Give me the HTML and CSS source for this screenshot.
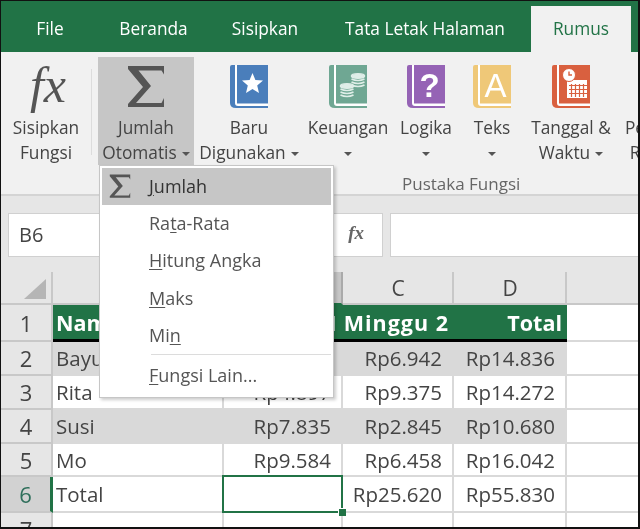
FILE: index.html
```html
<!DOCTYPE html>
<html lang="id">
<head>
<meta charset="utf-8">
<title>Rumus</title>
<link rel="stylesheet" href="styles.css">
</head>
<body>
<svg class="defs" width="0" height="0" aria-hidden="true">
  <symbol id="book" viewBox="0 0 38 44">
    <rect x="5" y="0" width="33" height="41" fill="#fff"/>
    <path d="M2 0H5V38Q5 41 8 41H38V43H6Q0 43 0 38V2Q0 0 2 0Z" fill="currentColor"/>
    <rect x="7" y="0" width="31" height="38.500" fill="currentColor"/>
  </symbol>
  <symbol id="sigma" viewBox="0 0 38 44">
    <path d="M1 1H37V9.5L34.5 5.5H11.5L24 21L9 38H34.5L37 33V42H1V39L16 22L1 4Z" fill="currentColor"/>
  </symbol>
</svg>
<div class="frame">
  <nav class="tabs">
    <span class="tab tab-file">File</span>
    <span class="tab tab-home">Beranda</span>
    <span class="tab tab-insert">Sisipkan</span>
    <span class="tab tab-layout">Tata Letak Halaman</span>
    <span class="tab tab-active">Rumus</span>
  </nav>

  <section class="ribbon">
    <div class="rb rb-fx">
      <div class="rb-icon fx-big">fx</div>
      <div class="rb-text">Sisipkan<br>Fungsi</div>
    </div>
    <div class="rb-sep"></div>
    <div class="rb rb-sum">
      <div class="rb-icon"><svg class="ic-sigma"><use href="#sigma"/></svg></div>
      <div class="rb-text">Jumlah<br>Otomatis<i class="caret"></i></div>
    </div>
    <div class="rb rb-recent">
      <div class="rb-icon">
        <svg class="ic-book c-blue" viewBox="0 0 38 44"><use href="#book" width="38" height="44"/><path d="M22.500 8l2.900 7 7.600.6-5.800 5 1.800 7.400-6.500-4-6.500 4 1.800-7.400-5.800-5 7.600-.6z" fill="#fff"/></svg>
      </div>
      <div class="rb-text">Baru<br>Digunakan<i class="caret"></i></div>
    </div>
    <div class="rb rb-fin">
      <div class="rb-icon">
        <svg class="ic-book c-teal" viewBox="0 0 38 44"><use href="#book" width="38" height="44"/>
          <g fill="none" stroke="#dfeee8" stroke-width="1.600"><ellipse cx="29" cy="11" rx="6.500" ry="2.200" fill="#dfeee8"/><path d="M22.500 14q6.500 3 13 0M22.500 17q6.500 3 13 0M22.500 20q6.500 3 13 0"/><ellipse cx="18" cy="21" rx="6.500" ry="2.200" fill="#dfeee8"/><path d="M11.500 24q6.500 3 13 0M11.500 27q6.500 3 13 0M11.500 30q6.500 3 13 0"/></g>
        </svg>
      </div>
      <div class="rb-text">Keuangan<br><i class="caret solo"></i></div>
    </div>
    <div class="rb rb-logic">
      <div class="rb-icon">
        <svg class="ic-book c-purple" viewBox="0 0 38 44"><use href="#book" width="38" height="44"/><text class="glyph" x="22.500" y="32" text-anchor="middle">?</text></svg>
      </div>
      <div class="rb-text">Logika<br><i class="caret solo"></i></div>
    </div>
    <div class="rb rb-text-fn">
      <div class="rb-icon">
        <svg class="ic-book c-yellow" viewBox="0 0 38 44"><use href="#book" width="38" height="44"/><text class="glyph glyph-thin" x="22.500" y="32" text-anchor="middle">A</text></svg>
      </div>
      <div class="rb-text">Teks<br><i class="caret solo"></i></div>
    </div>
    <div class="rb rb-date">
      <div class="rb-icon">
        <svg class="ic-book c-red" viewBox="0 0 38 44"><use href="#book" width="38" height="44"/>
          <rect x="15" y="15" width="20" height="18" fill="#fff"/>
          <circle cx="17" cy="10" r="6.500" fill="#fff" stroke="#d9603f" stroke-width="1"/>
          <path d="M17 6.500V10H20" stroke="#d9603f" stroke-width="1.400" fill="none"/>
          <path d="M17 20.500H35M17 24.500H35M17 28.500H35M19.500 19V32M23.500 19V32M27.500 19V32M31.500 19V32" stroke="#d9603f" stroke-width="1.200"/>
        </svg>
      </div>
      <div class="rb-text">Tanggal &amp;<br>Waktu<i class="caret"></i></div>
    </div>
    <div class="rb rb-more">
      <div class="rb-icon"></div>
      <div class="rb-text">Pe<br>R</div>
    </div>
    <div class="rb-group">Pustaka Fungsi</div>
  </section>

  <section class="formula">
    <div class="namebox">B6</div>
    <div class="fxbox">fx</div>
    <div class="fbox"></div>
  </section>

  <section class="sheet">
    <div class="grid">
      <div class="hd corner"><svg class="corner-tri" viewBox="0 0 22 20"><path d="M22 0V20H0Z" fill="#b5b5b5"/></svg></div>
      <div class="hd col">A</div>
      <div class="hd col col-sel">B</div>
      <div class="hd col">C</div>
      <div class="hd col">D</div>
      <div class="hd col col-blank"></div>

      <div class="hd row r1">1</div>
      <div class="c th r1 left">Nama</div>
      <div class="c th r1">Minggu 1</div>
      <div class="c th th-wide r1">Minggu 2</div>
      <div class="c th r1">Total</div>
      <div class="c blank"></div>

      <div class="hd row">2</div>
      <div class="c band left">Bayu</div>
      <div class="c band">Rp7.894</div>
      <div class="c band">Rp6.942</div>
      <div class="c band">Rp14.836</div>
      <div class="c blank"></div>

      <div class="hd row">3</div>
      <div class="c left">Rita</div>
      <div class="c">Rp4.897</div>
      <div class="c">Rp9.375</div>
      <div class="c">Rp14.272</div>
      <div class="c blank"></div>

      <div class="hd row">4</div>
      <div class="c band left">Susi</div>
      <div class="c band">Rp7.835</div>
      <div class="c band">Rp2.845</div>
      <div class="c band">Rp10.680</div>
      <div class="c blank"></div>

      <div class="hd row">5</div>
      <div class="c left">Mo</div>
      <div class="c">Rp9.584</div>
      <div class="c">Rp6.458</div>
      <div class="c">Rp16.042</div>
      <div class="c blank"></div>

      <div class="hd row row-sel">6</div>
      <div class="c left">Total</div>
      <div class="c cell-sel"><i class="handle"></i></div>
      <div class="c">Rp25.620</div>
      <div class="c">Rp55.830</div>
      <div class="c blank"></div>

      <div class="hd row">7</div>
      <div class="c"></div>
      <div class="c"></div>
      <div class="c"></div>
      <div class="c"></div>
      <div class="c blank"></div>
    </div>
  </section>

  <div class="menu">
    <div class="mi on"><svg class="mi-sigma"><use href="#sigma"/></svg><span><u>J</u>umlah</span></div>
    <div class="mi"><span>Ra<u>t</u>a-Rata</span></div>
    <div class="mi"><span><u>H</u>itung Angka</span></div>
    <div class="mi"><span><u>M</u>aks</span></div>
    <div class="mi"><span>Mi<u>n</u></span></div>
    <div class="mi-sep"></div>
    <div class="mi"><span><u>F</u>ungsi Lain...</span></div>
  </div>
</div>
</body>
</html>
```
FILE: styles.css
```css
* { box-sizing: border-box; }
html, body { margin: 0; padding: 0; background: #000; }
.defs { position: absolute; }
.frame {
  position: relative;
  width: 640px;
  height: 529px;
  overflow: hidden;
  background: #fff;
  border-style: solid;
  border-color: #111;
  border-width: 1px 2px 2px 1px;
  font-family: "Open Sans", "Noto Sans", sans-serif;
  font-size: 17px;
  color: #444;
  display: flex;
  flex-direction: column;
  filter: blur(.4px);
}

/* tabs */
.tabs {
  height: 51px;
  flex: none;
  background: #217346;
  color: #fff;
  display: flex;
  align-items: flex-end;
  font-size: 17.300px;
}
.tab { height: 46px; line-height: 46px; text-align: center; }
.tab-file { width: 68px; margin-left: 15px; }
.tab-home { width: 107px; margin-left: 16px; }
.tab-insert { width: 106px; margin-left: 5px; }
.tab-layout { width: 200px; margin-left: 7px; }
.tab-active { width: 100px; margin-left: 6px; background: #f1f1f1; color: #217346; }

/* ribbon */
.ribbon {
  position: relative;
  height: 144px;
  flex: none;
  background: #f1f1f1;
  border-bottom: 2px solid #d4d4d4;
  display: flex;
  padding-top: 5px;
  align-items: flex-start;
}
.rb { display: flex; flex-direction: column; align-items: center; flex: none; height: 108px; white-space: nowrap; }
.rb-icon { height: 55px; flex: none; display: flex; align-items: flex-start; justify-content: center; padding-top: 8px; }
.rb-text { line-height: 25px; text-align: center; color: #444; font-size: 17.300px; padding-top: 3px; }
.rb-fx { width: 90px; }
.rb-sep { width: 1px; height: 86px; margin-top: 12px; background: #dcdcdc; flex: none; }
.rb-sum { width: 96px; margin-left: 6px; background: #c6c6c6; }
.rb-recent { width: 106px; margin-left: 2px; }
.rb-fin { width: 84px; margin-left: 4px; }
.rb-logic { width: 60px; margin-left: 6px; }
.rb-text-fn { width: 52px; margin-left: 10px; }
.rb-date { width: 92px; margin-left: 7px; }
.rb-more { width: 28px; margin-left: 4px; }
.rb-group {
  position: absolute;
  left: 401px;
  top: 122px;
  font-size: 17px;
  line-height: 20px;
  color: #666;
  white-space: nowrap;
}
.fx-big {
  font-family: "Liberation Serif", serif;
  font-style: italic;
  font-size: 50px;
  color: #555;
  line-height: 48px;
  padding-top: 4px;
  padding-left: 4px;
}
.ic-sigma { width: 38px; height: 44px; color: #555; }
.ic-book { width: 38px; height: 44px; display: block; }
.c-blue { color: #4a7ebb; }
.c-teal { color: #6fa793; }
.c-purple { color: #9563b5; }
.c-yellow { color: #efc878; }
.c-red { color: #d9603f; }
.glyph { font-family: "Liberation Sans", sans-serif; font-weight: 700; font-size: 33px; fill: #fff; }
.glyph-thin { font-weight: 400; }
.caret {
  display: inline-block;
  width: 0;
  height: 0;
  margin-left: 5px;
  vertical-align: 3px;
  border-left: 4px solid transparent;
  border-right: 4px solid transparent;
  border-top: 4px solid #555;
}
.caret.solo { margin-left: 0; }

/* formula bar */
.formula {
  height: 76px;
  flex: none;
  background: #e6e6e6;
  display: flex;
  padding: 17px 0 15px 7px;
}
.namebox {
  width: 290px;
  background: #fff;
  border: 1px solid #d0d0d0;
  line-height: 41px;
  padding-left: 10px;
  font-size: 20px;
  color: #444;
}
.fxbox {
  width: 85px;
  background: #fff;
  border: 1px solid #d0d0d0;
  text-align: right;
  padding-right: 18px;
  line-height: 38px;
  font-family: "Liberation Serif", serif;
  font-style: italic;
  font-weight: 700;
  font-size: 19px;
  color: #666;
}
.fbox {
  flex: 1;
  margin-left: 7px;
  background: #fff;
  border: 1px solid #d0d0d0;
  border-right: 0;
}

/* sheet */
.sheet { flex: 1; min-height: 0; overflow: hidden; }
.grid {
  display: grid;
  grid-template-columns: 52px 171px 119px 111px 113px 1fr;
  grid-template-rows: 33px 37px 34px 34px 34px 33px 36px 34px;
}
.hd {
  background: #e6e6e6;
  color: #444;
  font-size: 22px;
  display: flex;
  align-items: center;
  justify-content: center;
  border-right: 2px solid #c8c8c8;
  border-bottom: 2px solid #c8c8c8;
}
.corner { position: relative; }
.corner-tri { position: absolute; right: 5px; bottom: 4px; width: 22px; height: 20px; }
.col { font-size: 21px; padding-left: 1px; }
.col-blank { border-right: 0; }
.col-sel { background: #c6c6c6; border-right-color: #aaa; border-bottom-color: #217346; }
.row-sel { background: #d2d2d2; color: #2f6f5b; border-right: 3px solid #217346; }
.c {
  background: #fff;
  border-right: 2px solid #d9d9d9;
  border-bottom: 2px solid #d9d9d9;
  display: flex;
  align-items: center;
  justify-content: flex-end;
  padding: 0 10px 0 3px;
  font-size: 20.500px;
  color: #444;
  white-space: nowrap;
}
.c.left { justify-content: flex-start; }
.blank { border-right: 0; }
.band { background: #d9d9d9; border-right-color: #d9d9d9; }
.th {
  background: #217346;
  color: #fff;
  font-weight: 700;
  font-size: 21.500px;
  border-right: 0;
  border-bottom: 3px solid #000;
  padding-right: 5px;
}
.th-wide { letter-spacing: 1px; }
.cell-sel { position: relative; }
.cell-sel::before {
  content: "";
  position: absolute;
  left: -2px;
  top: -2px;
  right: -2px;
  bottom: -2px;
  border: 2px solid #217346;
}
.handle {
  position: absolute;
  right: -5px;
  bottom: -5px;
  width: 8px;
  height: 8px;
  background: #217346;
  border-left: 1px solid #fff;
  border-top: 1px solid #fff;
}

/* menu */
.menu {
  position: absolute;
  left: 98px;
  top: 164px;
  width: 235px;
  height: 233px;
  background: #fff;
  border: 1px solid #c6c6c6;
  padding: 2px;
  box-shadow: 2px 2px 3px rgba(0, 0, 0, .2);
  font-size: 18px;
  color: #555;
}
.mi {
  position: relative;
  height: 37.200px;
  line-height: 36px;
  padding-left: 47px;
  white-space: nowrap;
}
.mi.on { background: #c6c6c6; color: #333; }
.mi-sigma { position: absolute; left: 6px; top: 6px; width: 24px; height: 25px; color: #555; }
.mi-sep { height: 1px; margin: 0 0 2px 49px; background: #dcdcdc; }
u { text-underline-offset: 2px; }
```
